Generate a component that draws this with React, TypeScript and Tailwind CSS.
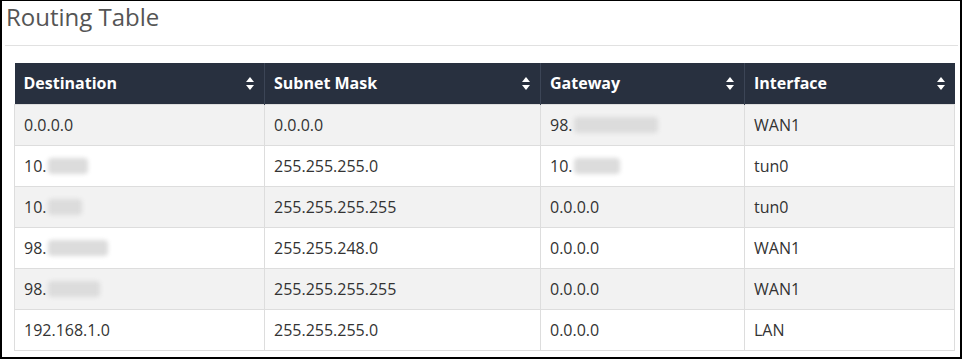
const columns = ['Destination', 'Subnet Mask', 'Gateway', 'Interface'];

type Cell = { text: string; blur?: number };

const rows: Cell[][] = [
  [{ text: '0.0.0.0' }, { text: '0.0.0.0' }, { text: '98.', blur: 84 }, { text: 'WAN1' }],
  [{ text: '10.', blur: 40 }, { text: '255.255.255.0' }, { text: '10.', blur: 46 }, { text: 'tun0' }],
  [{ text: '10.', blur: 34 }, { text: '255.255.255.255' }, { text: '0.0.0.0' }, { text: 'tun0' }],
  [{ text: '98.', blur: 60 }, { text: '255.255.248.0' }, { text: '0.0.0.0' }, { text: 'WAN1' }],
  [{ text: '98.', blur: 52 }, { text: '255.255.255.255' }, { text: '0.0.0.0' }, { text: 'WAN1' }],
  [{ text: '192.168.1.0' }, { text: '255.255.255.0' }, { text: '0.0.0.0' }, { text: 'LAN' }]
];

const widths = ['w-[250px]', 'w-[276px]', 'w-[204px]', 'w-[210px]'];

function SortIcon() {
  return (
    <svg width="8" height="13" viewBox="0 0 8 13" className="shrink-0">
      <path d="M4 0 L8 5 L0 5 Z" fill="#fff" />
      <path d="M0 8 L8 8 L4 13 Z" fill="#fff" />
    </svg>
  );
}

export default function App() {
  return (
    <div className="h-[359px] w-[962px] overflow-hidden border-2 border-t border-black bg-white font-['Open_Sans',sans-serif]">
      <h2 className="px-[4px] text-[24px] leading-[32px] text-[#555]">Routing Table</h2>
      <div className="mt-[12px] ml-[3px] mr-[2px] h-px bg-[#e1e1e1]" />
      <table className="mt-[17px] ml-[12px] table-fixed border-collapse">
        <thead>
          <tr className="bg-[#28303f]">
            {columns.map((c, i) => (
              <th
                key={c}
                className={`${widths[i]} h-[41px] border-r border-[#3c4556] pr-[10px] pl-[9px] text-left text-[16px] font-bold text-white last:border-r-0`}
              >
                <div className="flex items-center justify-between">
                  <span>{c}</span>
                  <SortIcon />
                </div>
              </th>
            ))}
          </tr>
        </thead>
        <tbody>
          {rows.map((r, ri) => (
            <tr key={ri} className={ri % 2 === 0 ? 'bg-[#f2f2f2]' : 'bg-white'}>
              {r.map((cell, ci) => (
                <td
                  key={ci}
                  className="h-[41px] border border-[#dddddd] pr-[10px] pl-[9px] text-[16px] text-[#333]"
                >
                  <span className="inline-flex items-center">
                    {cell.text}
                    {cell.blur ? (
                      <span
                        className="ml-px inline-block h-[16px] rounded-sm bg-[#dcdcdc] blur-[2px]"
                        style={{ width: cell.blur }}
                      />
                    ) : null}
                  </span>
                </td>
              ))}
            </tr>
          ))}
        </tbody>
      </table>
    </div>
  );
}
